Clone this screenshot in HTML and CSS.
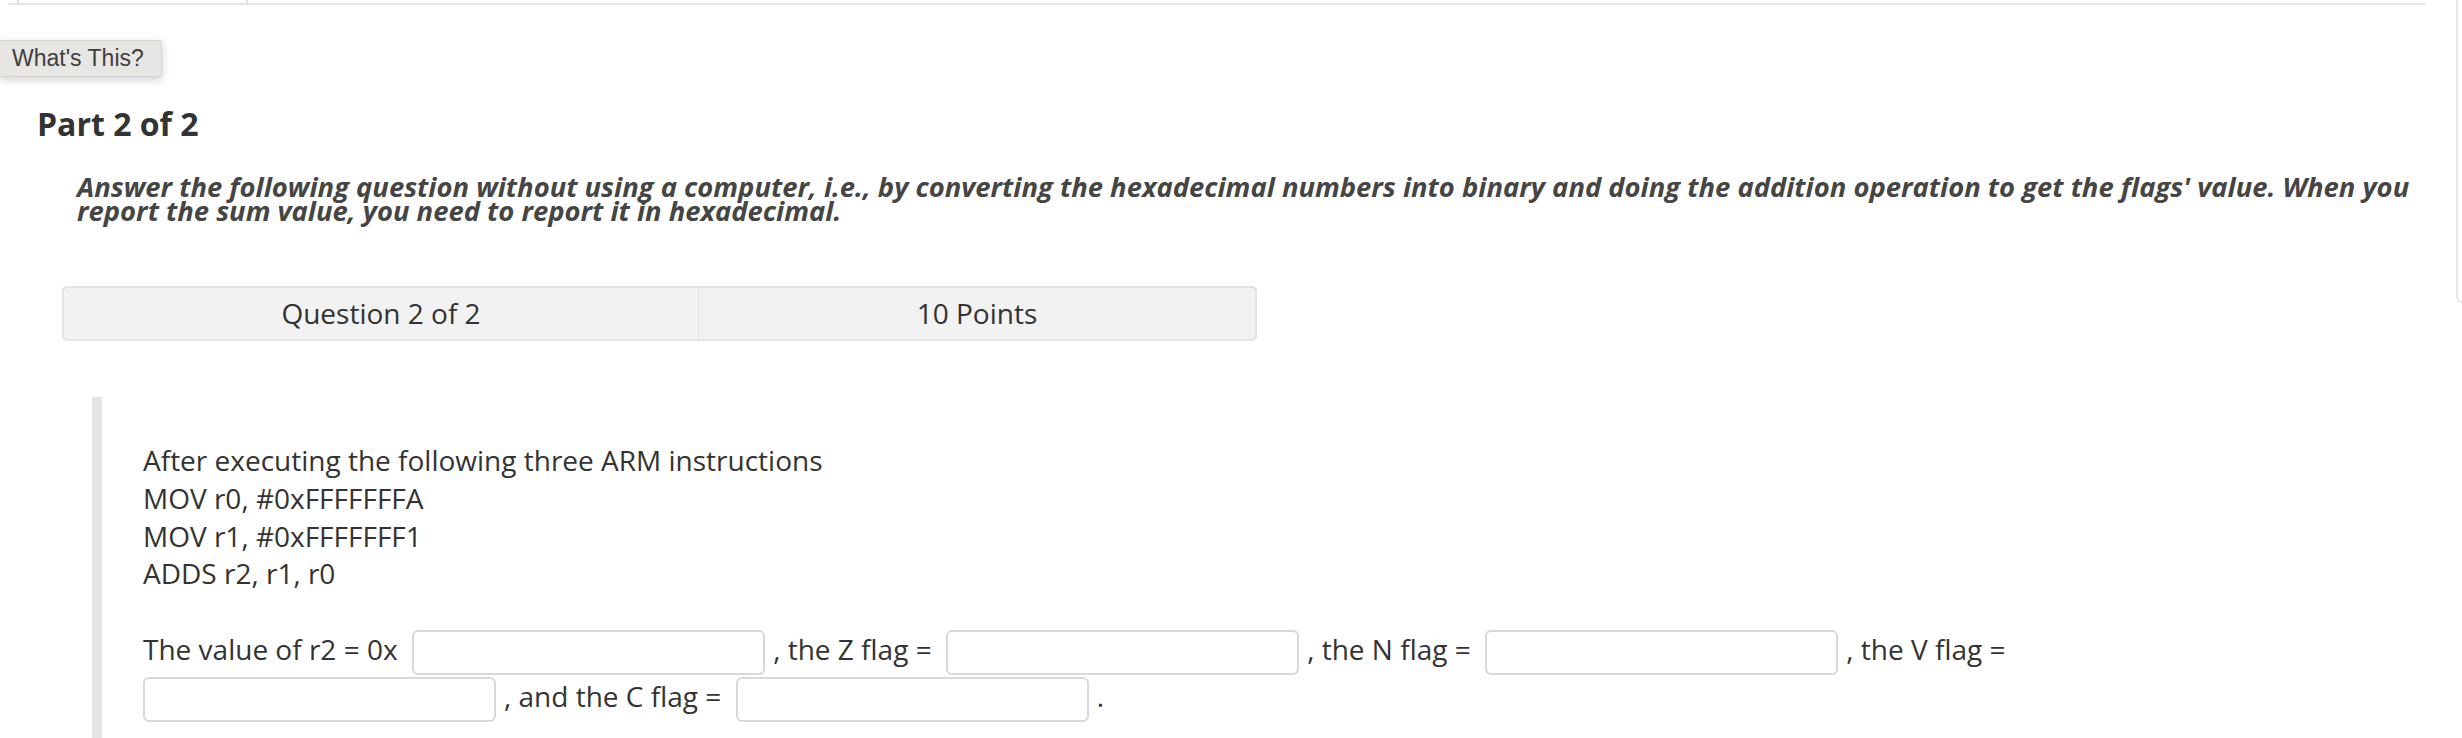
FILE: index.html
```html
<!DOCTYPE html>
<html lang="en">
<head>
<meta charset="utf-8">
<title>Part 2 of 2</title>
<link rel="stylesheet" href="styles.css">
</head>
<body>
<div class="topbar">
  <div class="topcell first"></div>
  <div class="topcell second"></div>
  <div class="topcell rest"></div>
</div>
<div class="side-edge"></div>

<button class="whats-this" type="button">What's This?</button>

<h2 class="part-title">Part 2 of 2</h2>

<p class="instructions">Answer the following question without using a computer, i.e., by converting the hexadecimal numbers into binary and doing the addition operation to get the flags' value. When you report the sum value, you need to report it in hexadecimal.</p>

<div class="q-header">
  <div class="q-cell q-num">Question 2 of 2</div>
  <div class="q-cell q-points">10 Points</div>
</div>

<div class="q-body">
  <p class="q-text">After executing the following three ARM instructions<br>MOV r0, #0xFFFFFFFA<br>MOV r1, #0xFFFFFFF1<br>ADDS r2, r1, r0</p>
  <p class="q-answer">The value of r2 = 0x&nbsp; <input class="blank" type="text">, the Z flag =&nbsp; <input class="blank" type="text">, the N flag =&nbsp; <input class="blank" type="text">, the V flag =&nbsp; <input class="blank" type="text">, and the C flag =&nbsp; <input class="blank" type="text">.</p>
</div>
</body>
</html>
```

FILE: styles.css
```css
html, body {
  margin: 0;
  padding: 0;
  background: #ffffff;
}

body {
  font-family: "Open Sans", "Noto Sans", sans-serif;
  color: #333333;
  width: 2462px;
  height: 738px;
  overflow: hidden;
  position: relative;
}

.topbar {
  display: flex;
  margin-left: 8px;
  width: 2417px;
  height: 3px;
  border-bottom: 2px solid #e3e3e3;
}

.topcell {
  height: 3px;
}

.topcell.first {
  width: 9px;
}

.topcell.second {
  width: 227px;
  border-left: 2px solid #e3e3e3;
}

.topcell.rest {
  flex: 1;
  border-left: 2px solid #e3e3e3;
}

.side-edge {
  position: absolute;
  top: 0;
  right: 0;
  width: 4px;
  height: 301px;
  border-left: 2px solid #e6e6e6;
  border-bottom: 2px solid #e6e6e6;
  border-bottom-left-radius: 6px;
}

.whats-this {
  display: block;
  margin: 35px 0 0 0;
  width: 162px;
  height: 37px;
  padding: 0 0 0 12px;
  text-align: left;
  font-family: "Liberation Sans", Arial, sans-serif;
  font-size: 23px;
  line-height: 35px;
  color: #3f3f3f;
  background: #e8e6e3;
  border: 1px solid #d8d5d2;
  border-left: none;
  border-radius: 0 3px 3px 0;
  box-shadow: 0 3px 9px rgba(0, 0, 0, 0.18);
}

.part-title {
  margin: 27px 0 0 37px;
  font-size: 32px;
  line-height: 40px;
  font-weight: 700;
  color: #333333;
}

.instructions {
  margin: 31px 8px 0 77px;
  font-size: 27.4px;
  line-height: 24px;
  font-weight: 700;
  font-style: italic;
  color: #454545;
}

.q-header {
  display: grid;
  grid-template-columns: 635px 1fr;
  margin: 63px 0 0 62px;
  width: 1195px;
  box-sizing: border-box;
  border: 2px solid #e3e3e3;
  border-radius: 5px;
  background: #f2f2f2;
}

.q-cell {
  text-align: center;
  font-size: 28px;
  line-height: 51px;
  color: #333333;
}

.q-num {
  border-right: 1px solid #e9e9e9;
}

.q-body {
  margin: 56px 0 0 92px;
  width: 2160px;
  height: 341px;
  box-sizing: border-box;
  border-left: 10px solid #e4e4e6;
  padding: 45px 0 0 41px;
  font-size: 28px;
  line-height: 37.8px;
  color: #333333;
}

.q-text {
  margin: 0;
}

.q-answer {
  margin: 36px 0 0 0;
}

.blank {
  width: 353px;
  height: 45px;
  box-sizing: border-box;
  margin: 1px 8px 1px 0;
  padding: 0 10px;
  vertical-align: middle;
  border: 2px solid #d8d8d8;
  border-radius: 6px;
  background: #ffffff;
  font-family: "Open Sans", sans-serif;
  font-size: 24px;
}
```
